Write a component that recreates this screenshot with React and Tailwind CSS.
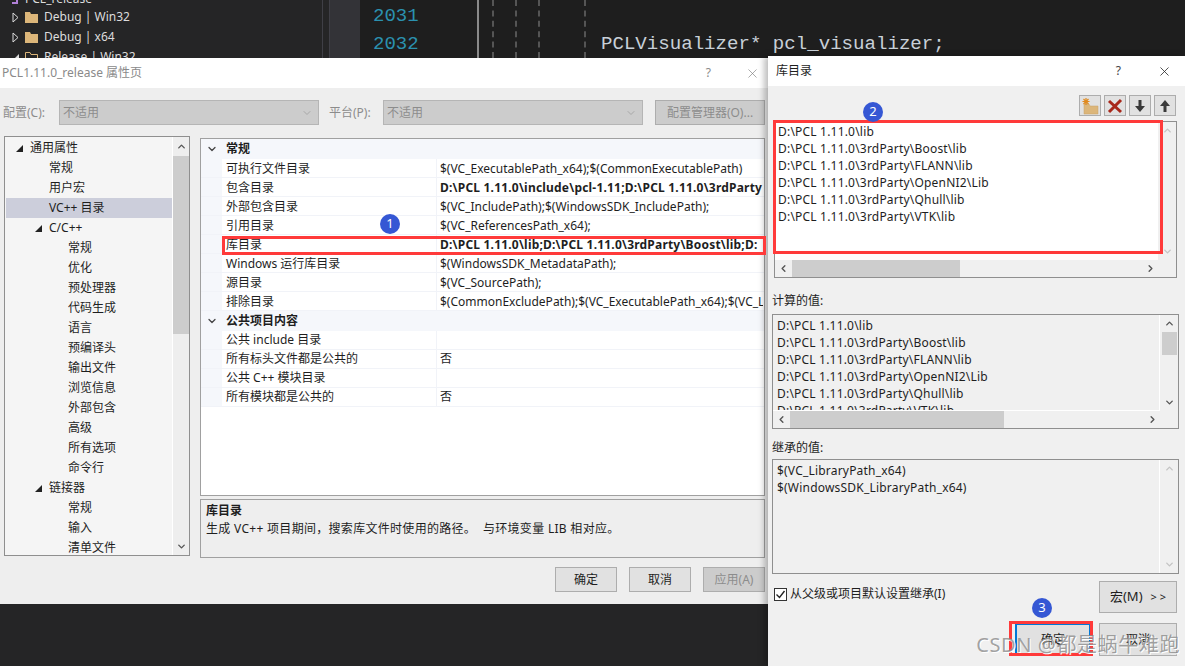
import { ChevronDown, ChevronUp, ChevronLeft, ChevronRight, X } from "lucide-react";

const treeItems = [
  { label: "通用属性", depth: 0, open: true },
  { label: "常规", depth: 1 },
  { label: "用户宏", depth: 1 },
  { label: "VC++ 目录", depth: 1, selected: true },
  { label: "C/C++", depth: 1, open: true },
  { label: "常规", depth: 2 },
  { label: "优化", depth: 2 },
  { label: "预处理器", depth: 2 },
  { label: "代码生成", depth: 2 },
  { label: "语言", depth: 2 },
  { label: "预编译头", depth: 2 },
  { label: "输出文件", depth: 2 },
  { label: "浏览信息", depth: 2 },
  { label: "外部包含", depth: 2 },
  { label: "高级", depth: 2 },
  { label: "所有选项", depth: 2 },
  { label: "命令行", depth: 2 },
  { label: "链接器", depth: 1, open: true },
  { label: "常规", depth: 2 },
  { label: "输入", depth: 2 },
  { label: "清单文件", depth: 2 },
];

const generalRows = [
  ["可执行文件目录", "$(VC_ExecutablePath_x64);$(CommonExecutablePath)"],
  ["包含目录", "D:\\PCL 1.11.0\\include\\pcl-1.11;D:\\PCL 1.11.0\\3rdParty", true],
  ["外部包含目录", "$(VC_IncludePath);$(WindowsSDK_IncludePath);"],
  ["引用目录", "$(VC_ReferencesPath_x64);"],
  ["库目录", "D:\\PCL 1.11.0\\lib;D:\\PCL 1.11.0\\3rdParty\\Boost\\lib;D:", true],
  ["Windows 运行库目录", "$(WindowsSDK_MetadataPath);"],
  ["源目录", "$(VC_SourcePath);"],
  ["排除目录", "$(CommonExcludePath);$(VC_ExecutablePath_x64);$(VC_LibraryPath_x64);"],
];

const publicRows = [
  ["公共 include 目录", ""],
  ["所有标头文件都是公共的", "否"],
  ["公共 C++ 模块目录", ""],
  ["所有模块都是公共的", "否"],
];

const libPaths = [
  "D:\\PCL 1.11.0\\lib",
  "D:\\PCL 1.11.0\\3rdParty\\Boost\\lib",
  "D:\\PCL 1.11.0\\3rdParty\\FLANN\\lib",
  "D:\\PCL 1.11.0\\3rdParty\\OpenNI2\\Lib",
  "D:\\PCL 1.11.0\\3rdParty\\Qhull\\lib",
  "D:\\PCL 1.11.0\\3rdParty\\VTK\\lib",
];

const uiFont = "font-['Noto_Sans','Noto_Sans_CJK_SC',sans-serif]";

// small black corner triangle used by the tree
function Corner({ color = "#222222" }) {
  return (
    <svg width="7" height="7" viewBox="0 0 7 7" className="shrink-0">
      <path d="M7 0V7H0Z" fill={color} />
    </svg>
  );
}

function Folder() {
  return (
    <svg width="13" height="11" viewBox="0 0 13 11" className="shrink-0">
      <path d="M0 0H5L6 2H13V11H0Z" fill="#dcb67a" />
    </svg>
  );
}

function TreeRow({ item }) {
  const pad = { 0: "pl-[24px]", 1: "pl-[43px]", 2: "pl-[62px]" }[item.depth];
  return (
    <div className={`h-5 flex items-center relative shrink-0 ${pad} ${item.selected ? "bg-[#cccedb]" : ""}`}>
      {item.open && (
        <span className={`absolute flex ${item.depth === 0 ? "left-[10px]" : "left-[29px]"}`}>
          <Corner />
        </span>
      )}
      <span>{item.label}</span>
    </div>
  );
}

function PropRow({ name, value, bold, lead = "leading-[18px]" }) {
  return (
    <div className="h-[19px] flex shrink-0 border-b border-[#f1f3f8]">
      <div className="w-[21px] bg-[#f5f7fb] shrink-0" />
      <div className={`w-[215px] pl-1 shrink-0 border-r border-[#f1f3f8] whitespace-nowrap ${lead}`}>{name}</div>
      <div className={`flex-1 pl-[3px] mr-[1px] whitespace-nowrap overflow-hidden ${lead} ${bold ? "font-bold tracking-[0.2px]" : ""}`}>{value}</div>
    </div>
  );
}

function Category({ label }) {
  return (
    <div className="h-5 flex items-center bg-[#f5f7fb] shrink-0">
      <div className="w-[21px] flex justify-center shrink-0">
        <ChevronDown size={12} strokeWidth={2.5} className="text-[#444444]" />
      </div>
      <span className="font-bold pl-1">{label}</span>
    </div>
  );
}

function WinButton({ children, disabled, className = "" }) {
  return (
    <div className={`h-[25px] flex items-center justify-center border border-[#adadad] ${disabled ? "bg-[#cccccc] text-[#8c8c8c]" : "bg-[#e1e1e1]"} ${className}`}>
      {children}
    </div>
  );
}

function HScroll({ thumbClass }) {
  return (
    <div className="h-[17px] flex items-center shrink-0 bg-[#f0f0f0]">
      <ChevronLeft size={11} strokeWidth={3} className="text-[#555555] ml-[3px] shrink-0" />
      <div className="flex-1 h-full mx-[3px]">
        <div className={`h-full bg-[#cdcdcd] ${thumbClass}`} />
      </div>
      <ChevronRight size={11} strokeWidth={3} className="text-[#555555] mr-[20px] shrink-0" />
    </div>
  );
}

function Badge({ n, className }) {
  return (
    <div className={`absolute w-5 h-5 rounded-full bg-[#3557d4] text-white text-[13px] flex items-center justify-center ${className}`}>{n}</div>
  );
}

function ToolButton({ children }) {
  return (
    <div className="w-[22px] h-[21px] bg-[#e1e1e1] border border-[#adadad] flex items-center justify-center">{children}</div>
  );
}

export default function App() {
  return (
    <div className={`relative w-[1185px] h-[666px] overflow-hidden bg-[#252526] text-[12px] text-[#1e1e1e] ${uiFont}`}>
      {/* Visual Studio behind the dialogs */}
      <div className="flex h-[58px] bg-[#1e1e1e]">
        <div className="w-[323px] bg-[#252526] text-[#dcdcdc] shrink-0 pl-[12px] border-r border-[#3f3f46]">
          <div className="h-[7px] overflow-hidden flex items-start gap-[7px]">
            <div className="w-[13px] h-[4px] -ml-[7px] border-2 border-t-0 border-[#b180d7]" />
            <span className="leading-[10px] -mt-[6px]">PCL_release</span>
          </div>
          <div className="h-5 flex items-center gap-[6px]">
            <svg width="7" height="11" viewBox="0 0 7 11"><path d="M1 1L6 5.5L1 10Z" fill="none" stroke="#dcdcdc" /></svg>
            <Folder />
            <span>Debug | Win32</span>
          </div>
          <div className="h-5 flex items-center gap-[6px]">
            <svg width="7" height="11" viewBox="0 0 7 11"><path d="M1 1L6 5.5L1 10Z" fill="none" stroke="#dcdcdc" /></svg>
            <Folder />
            <span>Debug | x64</span>
          </div>
          <div className="h-5 flex items-center gap-[6px]">
            <Corner color="#dcdcdc" />
            <svg width="13" height="11" viewBox="0 0 13 11"><path d="M.5.5H5L6 2.5H12.5V10.5H.5Z" fill="none" stroke="#dcb67a" /></svg>
            <span>Release | Win32</span>
          </div>
        </div>
        <div className="w-[6px] bg-[#252526] shrink-0" />
        <div className="w-[31px] bg-[#333337] border-l border-[#3f3f46] shrink-0" />
        <div className="w-[117px] shrink-0 pl-[13px] pt-[2px] text-[#2b91af] font-['Liberation_Mono',monospace] text-[19px] leading-[28px]">
          <div>2031</div>
          <div>2032</div>
        </div>
        <div className="w-[2px] bg-[#8a8a8a] shrink-0" />
        <div className="flex-1 flex">
          <div className="flex gap-[21px] pl-[13px]">
            <div className="border-l-2 border-dashed border-[#555555] h-full" />
            <div className="border-l-2 border-dashed border-[#555555] h-full" />
            <div className="border-l-2 border-dashed border-[#555555] h-full" />
            <div className="border-l-2 border-dashed border-[#555555] h-full ml-[23px]" />
          </div>
          <div className="pl-[15px] pt-[30px] text-[#c8d0d8] font-['Liberation_Mono',monospace] text-[19.1px] leading-[28px] whitespace-nowrap">PCLVisualizer* pcl_visualizer;</div>
        </div>
      </div>

      {/* Property pages window */}
      <div className="absolute left-0 top-[58px] w-[768px] h-[546px] bg-[#eeeeee] flex flex-col overflow-hidden">
        <div className="h-[30px] bg-white flex items-center justify-between shrink-0 pl-[2px] pr-[8px] text-[#8a8a8a]">
          <span>PCL1.11.0_release 属性页</span>
          <div className="flex items-center gap-[34px]">
            <span>?</span>
            <X size={15} strokeWidth={1} className="text-[#777777]" />
          </div>
        </div>

        <div className="flex items-center h-[25px] mt-[12px] shrink-0 pl-[3px] text-[#8c8c8c]">
          <span className="w-[56px]">配置(C):</span>
          <div className="w-[260px] h-[25px] bg-[#cccccc] border border-[#b5b5b5] flex items-center justify-between px-[3px]">
            <span>不适用</span>
            <ChevronDown size={12} className="text-[#a8a8a8] mr-[2px]" />
          </div>
          <span className="w-[64px] pl-[10px]">平台(P):</span>
          <div className="w-[260px] h-[25px] bg-[#cccccc] border border-[#b5b5b5] flex items-center justify-between px-[3px]">
            <span>不适用</span>
            <ChevronDown size={12} className="text-[#a8a8a8] mr-[2px]" />
          </div>
          <WinButton disabled className="w-[110px] ml-[12px]">配置管理器(O)...</WinButton>
        </div>

        <div className="flex mt-[11px] pl-[4px] pr-[3px] gap-[10px] h-[421px] shrink-0">
          {/* Tree */}
          <div className="w-[186px] h-[420px] bg-[#f5f5f5] border border-[#8f8f8f] flex overflow-hidden shrink-0">
            <div className="flex-1 flex flex-col pt-[1px] pl-px">
              {treeItems.map((item, i) => (
                <TreeRow key={i} item={item} />
              ))}
            </div>
            <div className="w-[17px] bg-[#eeeeee] flex flex-col items-center border-l border-white shrink-0">
              <ChevronUp size={11} strokeWidth={3} className="text-[#555555] mt-[4px] shrink-0" />
              <div className="w-full h-[178px] bg-[#cdcdcd] mt-[4px]" />
              <ChevronDown size={11} strokeWidth={3} className="text-[#555555] mt-auto mb-[3px] shrink-0" />
            </div>
          </div>

          {/* Property grid + description */}
          <div className="flex-1 flex flex-col pt-[2px] min-w-0">
            <div className="h-[358px] bg-white border border-[#a0a0a0] flex flex-col overflow-hidden shrink-0">
              <Category label="常规" />
              {generalRows.map((r, i) => (
                <PropRow key={i} name={r[0]} value={r[1]} bold={r[2]} lead="leading-[20px]" />
              ))}
              <Category label="公共项目内容" />
              {publicRows.map((r, i) => (
                <PropRow key={i} name={r[0]} value={r[1]} />
              ))}
            </div>
            <div className="h-[59px] mt-[3px] bg-[#eeeeee] border border-[#a0a0a0] px-[5px] pt-[2px] leading-[18px] shrink-0">
              <div className="font-bold">库目录</div>
              <div className="tracking-[0.3px] whitespace-pre">生成 VC++ 项目期间，搜索库文件时使用的路径。  与环境变量 LIB 相对应。</div>
            </div>
          </div>
        </div>

        <div className="flex justify-end gap-[12px] mt-[10px] pr-[3px]">
          <WinButton className="w-[62px]">确定</WinButton>
          <WinButton className="w-[62px]">取消</WinButton>
          <WinButton disabled className="w-[62px]">应用(A)</WinButton>
        </div>
      </div>

      {/* Library directories dialog */}
      <div className="absolute left-[768px] top-[56px] w-[417px] h-[610px] bg-[#f0f0f0] flex flex-col overflow-hidden shadow-[-4px_0_6px_rgba(0,0,0,0.25)]">
        <div className="h-[30px] bg-white flex items-center justify-between shrink-0 pl-[8px] pr-[13px]">
          <span>库目录</span>
          <div className="flex items-center gap-[36px]">
            <span className="text-[#444444]">?</span>
            <X size={15} strokeWidth={1.25} className="text-[#222222]" />
          </div>
        </div>

        <div className="flex justify-end gap-[3px] mt-[9px] pr-[9px] shrink-0">
          <ToolButton>
            <svg width="18" height="18" viewBox="0 0 18 18">
              <path d="M3 7H8L9 9H17V17H3Z" fill="#dcb67a" stroke="#c9a36a" strokeWidth=".5" />
              <path d="M5 1V8M1.5 4.5H8.5M2.5 2L7.5 7M7.5 2L2.5 7" stroke="#e08a1e" strokeWidth="1.2" />
            </svg>
          </ToolButton>
          <ToolButton>
            <svg width="16" height="16" viewBox="0 0 16 16">
              <path d="M2 3L14 14M14 2L2 14" stroke="#a8281b" strokeWidth="3" />
            </svg>
          </ToolButton>
          <ToolButton>
            <svg width="14" height="14" viewBox="0 0 14 14">
              <path d="M5.5 1H8.5V7H12L7 13L2 7H5.5Z" fill="#3a3a3a" />
            </svg>
          </ToolButton>
          <ToolButton>
            <svg width="14" height="14" viewBox="0 0 14 14">
              <path d="M5.5 13H8.5V7H12L7 1L2 7H5.5Z" fill="#3a3a3a" />
            </svg>
          </ToolButton>
        </div>

        {/* Editable list */}
        <div className="ml-[6px] mr-[8px] mt-[5px] h-[157px] border border-[#8f8f8f] flex flex-col shrink-0">
          <div className="flex-1 flex min-h-0">
            <div className="flex-1 bg-white pl-[3px] pt-[1px] leading-[17px] tracking-[0.2px]">
              {libPaths.map((p) => (
                <div key={p}>{p}</div>
              ))}
            </div>
            <div className="w-[18px] flex flex-col items-center justify-between py-[3px] text-[#c4c4c4]">
              <ChevronUp size={11} strokeWidth={3} />
              <ChevronDown size={11} strokeWidth={3} />
            </div>
          </div>
          <HScroll thumbClass="w-[168px]" />
        </div>

        <div className="mt-[14px] pl-[4px] leading-[17px]">计算的值:</div>
        <div className="ml-[4px] mr-[6px] mt-[5px] h-[115px] border border-[#8f8f8f] flex flex-col shrink-0">
          <div className="flex-1 flex min-h-0">
            <div className="flex-1 overflow-hidden pl-[4px] pt-[2px] leading-[17px] tracking-[0.2px] border-r border-b border-white">
              {libPaths.map((p) => (
                <div key={p}>{p}</div>
              ))}
            </div>
            <div className="w-[18px] flex flex-col items-center text-[#555555] py-[3px]">
              <ChevronUp size={11} strokeWidth={3} className="shrink-0" />
              <div className="w-[15px] h-[23px] bg-[#cdcdcd] mt-[3px]" />
              <ChevronDown size={11} strokeWidth={3} className="mt-auto shrink-0" />
            </div>
          </div>
          <HScroll thumbClass="w-[214px]" />
        </div>

        <div className="mt-[10px] pl-[4px] leading-[17px]">继承的值:</div>
        <div className="ml-[4px] mr-[6px] mt-[3px] h-[115px] border border-[#8f8f8f] flex shrink-0">
          <div className="flex-1 pl-[4px] pt-[2px] leading-[17px] tracking-[0.2px] border-r border-white">
            <div>$(VC_LibraryPath_x64)</div>
            <div>$(WindowsSDK_LibraryPath_x64)</div>
          </div>
          <div className="w-[18px] flex flex-col items-center justify-between py-[3px] text-[#c4c4c4]">
            <ChevronUp size={11} strokeWidth={3} />
            <ChevronDown size={11} strokeWidth={3} />
          </div>
        </div>

        <div className="flex justify-between items-start pl-[6px] pr-[8px] mt-[7px] shrink-0">
          <div className="flex items-center gap-[3px] mt-[4px]">
            <div className="w-[13px] h-[13px] bg-white border border-[#333333] flex items-center justify-center">
              <svg width="11" height="11" viewBox="0 0 11 11"><path d="M1.5 5.5L4.5 8.5L9.5 2" fill="none" stroke="#222222" strokeWidth="1.4" /></svg>
            </div>
            <span>从父级或项目默认设置继承(I)</span>
          </div>
          <div className="w-[78px] h-[32px] bg-[#e1e1e1] border border-[#adadad] flex items-center justify-center gap-2 text-[13px]">
            <span>宏(M)</span>
            <span className="text-[11px]">&gt; &gt;</span>
          </div>
        </div>
        <div className="flex justify-end gap-[8px] pr-[8px] mt-[10px] shrink-0">
          <div className="w-[76px] h-[33px] bg-[#e1e1e1] border-2 border-[#0078d7] flex items-center justify-center">确定</div>
          <div className="w-[78px] h-[33px] bg-[#e1e1e1] border border-[#adadad] flex items-center justify-center">取消</div>
        </div>
      </div>

      {/* Annotations */}
      <div className="absolute left-[222px] top-[236px] w-[544px] h-[19px] border-[3px] border-[#ff3a3a]" />
      <div className="absolute left-[773px] top-[120px] w-[390px] h-[134px] border-[3px] border-[#ff3a3a]" />
      <div className="absolute left-[1009px] top-[621px] w-[84px] h-[35px] border-[3px] border-[#ff3a3a]" />
      <Badge n="1" className="left-[380px] top-[214px]" />
      <Badge n="2" className="left-[863px] top-[102px]" />
      <Badge n="3" className="left-[1032px] top-[598px]" />
      <div className="absolute right-[5px] top-[633px] text-[20px] tracking-[0.6px] text-[#8a8a8a]/80 whitespace-nowrap leading-[24px] [text-shadow:1px_1px_0_#ffffff]">CSDN @都是蜗牛难跑</div>
    </div>
  );
}
